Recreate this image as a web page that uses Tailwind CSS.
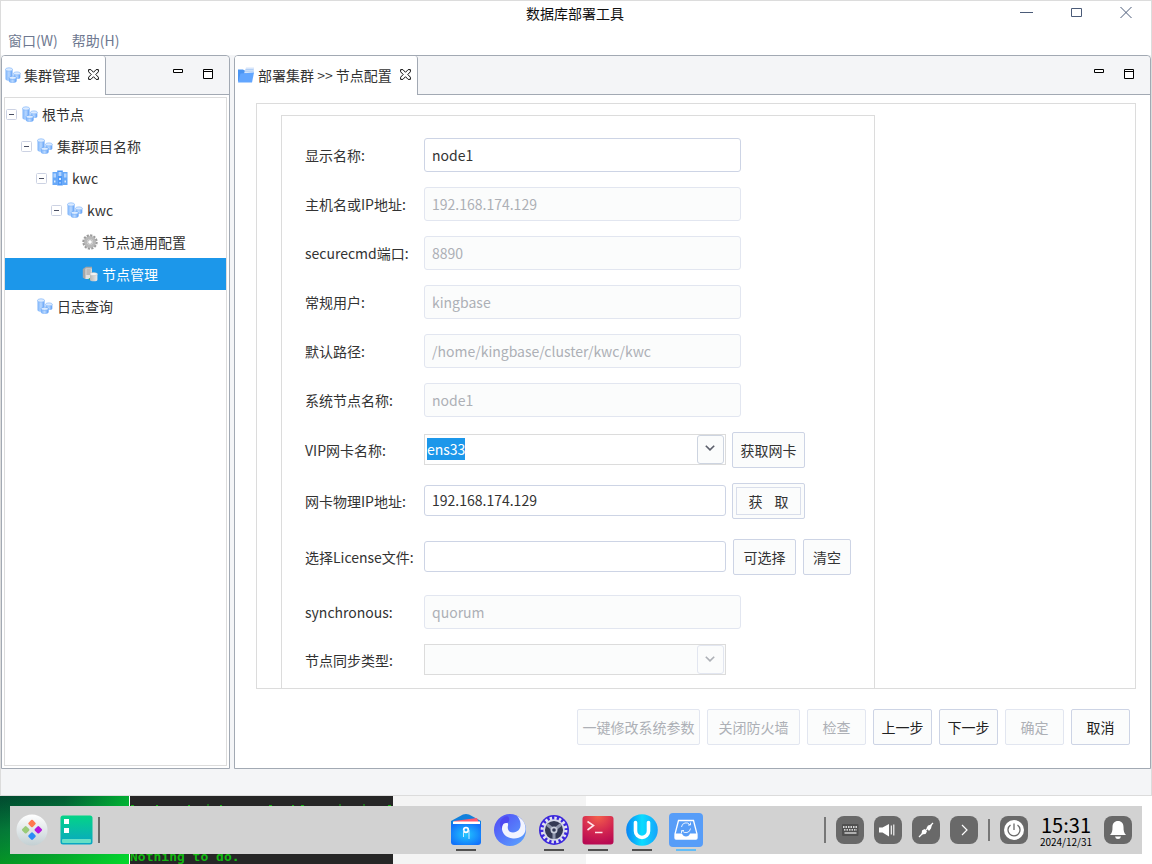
<!DOCTYPE html>
<html lang="zh-CN">
<head>
  <meta charset="UTF-8" />
  <meta name="viewport" content="width=device-width, initial-scale=1.0" />
  <title>数据库部署工具</title>
  <script src="https://cdn.jsdelivr.net/npm/@tailwindcss/browser@4"></script>
</head>
<body class="h-screen flex flex-col overflow-hidden bg-white font-['Noto_Sans_CJK_SC',sans-serif] text-sm text-[#333]">

  <!-- Icons -->
  <svg class="absolute size-0">
    <defs>
      <linearGradient id="cyl" x1="0" x2="1"><stop offset="0" stop-color="#7ab2fa" /><stop offset=".5" stop-color="#b9d8ff" /><stop offset="1" stop-color="#5c9df5" /></linearGradient>
      <linearGradient id="grey" x1="0" x2="1"><stop offset="0" stop-color="#b8b8b8" /><stop offset="1" stop-color="#e9e9e9" /></linearGradient>
    </defs>
    <symbol id="i-db" viewBox="0 0 16 16">
      <path d="M.5 2.500v9.500c0 1.200 1.500 1.800 3.500 1.800s3.500-.6 3.500-1.800V2.500z" fill="url(#cyl)" />
      <ellipse cx="4" cy="2.500" rx="3.500" ry="1.700" fill="#dcebff" stroke="#84b7fa" stroke-width=".7" />
      <path d="M8.500 6.500v4c0 1 1.400 1.600 3.300 1.600s3.500-.6 3.500-1.600v-4z" fill="url(#cyl)" />
      <ellipse cx="11.900" cy="6.400" rx="3.400" ry="1.500" fill="#dcebff" stroke="#84b7fa" stroke-width=".7" />
      <path d="M4 10.800V14c0 1 1.500 1.600 3.700 1.600s3.700-.6 3.700-1.600v-3.200z" fill="url(#cyl)" stroke="#6faaf8" stroke-width=".5" />
      <ellipse cx="7.700" cy="10.800" rx="3.700" ry="1.600" fill="#dcebff" stroke="#6faaf8" stroke-width=".7" />
    </symbol>
    <symbol id="i-rack" viewBox="0 0 16 16">
      <path d="M.5 2h4.700v13H.5zM10.800 2h4.700v13h-4.700z" fill="#67a8f8" />
      <path d="M5.200.5h5.600v15H5.200z" fill="#4f99f7" />
      <path d="M1.500 3.500h2.500v4H1.500zM12 3.500h2.500v4H12zM6.500 2h3v4h-3z" fill="#b4d5ff" />
      <path d="M2 10.500h1.500v2H2zM12.500 10.500H14v2h-1.500zM7 8h2v2H7zM7.500 12h1v1.500h-1z" fill="#dcecff" />
    </symbol>
    <symbol id="i-gear" viewBox="0 0 16 16">
      <circle cx="8" cy="8" r="6.700" fill="none" stroke="#9b9b9b" stroke-width="2" stroke-dasharray="2.200 1.300" />
      <circle cx="8" cy="8" r="4.300" fill="none" stroke="#b9b9b9" stroke-width="3" />
      <circle cx="8" cy="8" r="5.900" fill="none" stroke="#969696" stroke-width=".5" />
      <circle cx="8" cy="8" r="2.300" fill="#fff" stroke="#8f8f8f" stroke-width=".6" />
    </symbol>
    <symbol id="i-server" viewBox="0 0 16 16">
      <path d="M.8 3 4 .8h6V13H3L.8 11.500z" fill="#a6a6a6" />
      <path d="M3.500 2.500h6.300V13H3.500z" fill="#e3e3e3" />
      <path d="M4.300 4h4.500M4.300 6h4.500M4.300 8h4" stroke="#8a8a8a" stroke-width=".9" />
      <path d="M8 8v5.800c0 1 1.400 1.500 3.700 1.500s3.700-.5 3.700-1.500V8z" fill="url(#grey)" />
      <ellipse cx="11.700" cy="8" rx="3.700" ry="1.500" fill="#f5f5f5" stroke="#bbb" stroke-width=".5" />
      <path d="M6.800 12.200h1.200v1.200H6.800z" fill="#3fae49" />
    </symbol>
    <symbol id="i-folder" viewBox="0 0 16 16">
      <path d="M0 2.500h5l1.500 1H8v11H0z" fill="#4b95f3" />
      <path d="M8 .5h8v6H6z" fill="#d7e6fb" />
      <path d="M7.500 2.500h8M7 4.200h8.500" stroke="#a8c9f5" stroke-width=".8" />
      <path d="M2.500 6.500 16 5.500l-2 10H0z" fill="#62a6ff" />
    </symbol>
    <symbol id="i-close" viewBox="0 0 11 11">
      <path d="M.6.6h2.300l2.600 2.700L8.100.6h2.300v2.200L7.800 5.500l2.600 2.700v2.200H8.100L5.500 7.700l-2.600 2.700H.6V8.200l2.600-2.700L.6 2.800z" fill="#fff" stroke="#111" stroke-width="1" />
    </symbol>
    <symbol id="i-min" viewBox="0 0 10 10"><path d="M.5.500h9v3h-9z" fill="#fff" stroke="#000" /></symbol>
    <symbol id="i-max" viewBox="0 0 10 10"><path d="M.5.500h9v9h-9zM1 2.500h8" fill="#fff" stroke="#000" /></symbol>
    <symbol id="i-minus" viewBox="0 0 11 11"><rect x=".5" y=".5" width="10" height="10" rx="1" fill="#fff" stroke="#ccd2e3" /><path d="M3 5.500h5" stroke="#4a4f63" /></symbol>
    <symbol id="i-down" viewBox="0 0 10 6"><path d="m.8.700 4.200 4.200L9.200.700" fill="none" stroke="currentColor" stroke-width="1.600" /></symbol>
  </svg>

  <!-- Janela principal -->
  <div class="flex-1 min-h-0 flex flex-col border border-[#dcdcdc] bg-[#f4f5f7]">
    <header class="relative bg-white h-[54px] shrink-0">
      <h1 class="text-center leading-6 pr-[2px] text-[#111]">数据库部署工具</h1>
      <div class="absolute right-[19px] top-[5px] flex gap-[38px] text-[#4b5b78]">
        <button aria-label="最小化"><svg class="w-[13px] h-[13px]" viewBox="0 0 13 13"><path d="M0 6.500h13" stroke="currentColor" /></svg></button>
        <button aria-label="最大化"><svg class="w-[11px] h-[13px]" viewBox="0 0 11 13"><path d="M.5 2.500h10v8H.500z" fill="none" stroke="currentColor" /></svg></button>
        <button aria-label="关闭"><svg class="w-[12px] h-[13px]" viewBox="0 0 12 13"><path d="m.5 1 11 11M11.500 1l-11 11" fill="none" stroke="currentColor" /></svg></button>
      </div>
      <nav class="flex gap-[14px] px-[7px] pt-[5px] text-[#6e7890]">
        <button>窗口(W)</button>
        <button>帮助(H)</button>
      </nav>
    </header>

    <div class="flex-1 min-h-0 flex gap-1">
      <!-- Árvore -->
      <aside class="w-[229px] shrink-0 flex flex-col bg-white border border-[#a2a9b3] rounded-t-[4px]">
        <div class="flex h-[39px] shrink-0 bg-[#f4f5f7] rounded-t-[4px]">
          <div class="flex items-center pl-[3px] pr-[6px] pb-[2px] bg-white border-r border-[#a2a9b3] rounded-t-[3px]">
            <svg class="size-4 mr-[3px]"><use href="#i-db" /></svg>
            <span>集群管理</span>
            <button class="ml-2" aria-label="关闭"><svg class="size-[11px]"><use href="#i-close" /></svg></button>
          </div>
          <div class="flex-1 flex justify-end items-start gap-5 pt-[13px] pr-4 border-b border-[#a2a9b3]">
            <button aria-label="最小化"><svg class="size-[10px]"><use href="#i-min" /></svg></button>
            <button aria-label="最大化"><svg class="size-[10px]"><use href="#i-max" /></svg></button>
          </div>
        </div>
        <ul class="flex-1 m-[2px] border border-[#dcdcdc] *:flex *:items-center *:h-8">
          <li class="pl-[1px]"><svg class="size-[11px] mr-[5px]"><use href="#i-minus" /></svg><svg class="size-4 mr-1"><use href="#i-db" /></svg>根节点</li>
          <li class="pl-4"><svg class="size-[11px] mr-[5px]"><use href="#i-minus" /></svg><svg class="size-4 mr-1"><use href="#i-db" /></svg>集群项目名称</li>
          <li class="pl-[31px]"><svg class="size-[11px] mr-[5px]"><use href="#i-minus" /></svg><svg class="size-4 mr-1"><use href="#i-rack" /></svg>kwc</li>
          <li class="pl-[46px]"><svg class="size-[11px] mr-[5px]"><use href="#i-minus" /></svg><svg class="size-4 mr-1"><use href="#i-db" /></svg>kwc</li>
          <li class="pl-[77px]"><svg class="size-4 mr-1"><use href="#i-gear" /></svg>节点通用配置</li>
          <li class="pl-[77px] bg-[#1c97ea] text-white"><svg class="size-4 mr-1"><use href="#i-server" /></svg>节点管理</li>
          <li class="pl-8"><svg class="size-4 mr-1"><use href="#i-db" /></svg>日志查询</li>
        </ul>
      </aside>

      <!-- Configuração do nó -->
      <main class="flex-1 min-w-0 flex flex-col bg-white border border-[#a2a9b3] rounded-t-[4px]">
        <div class="flex h-[39px] shrink-0 bg-[#f4f5f7] rounded-t-[4px]">
          <div class="flex items-center pl-[3px] pr-[6px] pb-[2px] bg-white border-r border-[#a2a9b3] rounded-t-[3px]">
            <svg class="size-4 mr-1"><use href="#i-folder" /></svg>
            <span>部署集群 &gt;&gt; 节点配置</span>
            <button class="ml-2" aria-label="关闭"><svg class="size-[11px]"><use href="#i-close" /></svg></button>
          </div>
          <div class="flex-1 flex justify-end items-start gap-5 pt-[13px] pr-4 border-b border-[#a2a9b3]">
            <button aria-label="最小化"><svg class="size-[10px]"><use href="#i-min" /></svg></button>
            <button aria-label="最大化"><svg class="size-[10px]"><use href="#i-max" /></svg></button>
          </div>
        </div>

        <form class="flex-1 min-h-0 flex flex-col pt-2 pl-[21px] pr-[14px] pb-[23px]">
          <div class="flex-1 min-h-0 overflow-hidden border border-[#dcdcdc] pt-[11px] pl-6">
            <div class="w-[594px] h-full border border-b-0 border-[#dcdcdc] pt-[22px] pl-[23px]">
              <div class="flex flex-col gap-[15px]">
                <div class="flex items-center h-[34px]">
                  <label for="nome" class="w-[119px]">显示名称:</label>
                  <input id="nome" value="node1" class="w-[317px] h-[34px] px-[7px] border border-[#cdd4e5] rounded-[3px]">
                </div>
                <div class="flex items-center h-[34px]">
                  <label for="host" class="w-[119px]">主机名或IP地址:</label>
                  <input id="host" value="192.168.174.129" disabled class="w-[317px] h-[34px] px-[7px] border border-[#e2e6f0] rounded-[3px] bg-[#fbfcfc] text-[#adb0b6]">
                </div>
                <div class="flex items-center h-[34px]">
                  <label for="porta" class="w-[119px]">securecmd端口:</label>
                  <input id="porta" value="8890" disabled class="w-[317px] h-[34px] px-[7px] border border-[#e2e6f0] rounded-[3px] bg-[#fbfcfc] text-[#adb0b6]">
                </div>
                <div class="flex items-center h-[34px]">
                  <label for="usuario" class="w-[119px]">常规用户:</label>
                  <input id="usuario" value="kingbase" disabled class="w-[317px] h-[34px] px-[7px] border border-[#e2e6f0] rounded-[3px] bg-[#fbfcfc] text-[#adb0b6]">
                </div>
                <div class="flex items-center h-[34px]">
                  <label for="caminho" class="w-[119px]">默认路径:</label>
                  <input id="caminho" value="/home/kingbase/cluster/kwc/kwc" disabled class="w-[317px] h-[34px] px-[7px] border border-[#e2e6f0] rounded-[3px] bg-[#fbfcfc] text-[#adb0b6]">
                </div>
                <div class="flex items-center h-[34px]">
                  <label for="sistema" class="w-[119px]">系统节点名称:</label>
                  <input id="sistema" value="node1" disabled class="w-[317px] h-[34px] px-[7px] border border-[#e2e6f0] rounded-[3px] bg-[#fbfcfc] text-[#adb0b6]">
                </div>
                <div class="flex items-center h-9">
                  <label for="vip" class="w-[119px]">VIP网卡名称:</label>
                  <div class="flex items-center w-[302px] h-[31px] mb-[2px] pl-[2px] pr-[1px] border border-[#dcdcdc]">
                    <select id="vip" class="appearance-none field-sizing-content h-[22px] leading-[22px] bg-[#1c97ea] text-white"><option>ens33</option></select>
                    <span class="ml-auto flex items-center justify-center w-[27px] h-[29px] pr-[2px] pb-[2px] border border-[#cdd4e0] rounded-[3px] bg-[#fbfcfc] text-[#5c5f6b]"><svg class="w-[10px] h-[6px]"><use href="#i-down" /></svg></span>
                  </div>
                  <button type="button" class="ml-[6px] w-[73px] h-9 border border-[#cdd4e5] rounded-[2px] bg-[#fbfcfc]">获取网卡</button>
                </div>
                <div class="flex items-center h-9">
                  <label for="ip" class="w-[119px]">网卡物理IP地址:</label>
                  <input id="ip" value="192.168.174.129" class="w-[302px] h-[31px] mb-[2px] px-[7px] border border-[#cdd4e5] rounded-[3px]">
                  <button type="button" class="ml-[6px] w-[73px] h-9 p-[3px] border border-[#cdd4e5] rounded-[2px] bg-[#fbfcfc]"><span class="flex items-center justify-center gap-3 h-full border border-[#d9deeb]"><span>获</span><span>取</span></span></button>
                </div>
              </div>
              <div class="flex items-center h-9 mt-5">
                <label for="licenca" class="w-[119px] whitespace-nowrap">选择License文件:</label>
                <input id="licenca" class="w-[302px] h-[31px] mb-[2px] px-[7px] border border-[#cdd4e5] rounded-[3px]">
                <button type="button" class="ml-[7px] w-[63px] h-9 border border-[#cdd4e5] rounded-[2px] bg-[#fbfcfc]">可选择</button>
                <button type="button" class="ml-[7px] w-[48px] h-9 border border-[#cdd4e5] rounded-[2px] bg-[#fbfcfc]">清空</button>
              </div>
              <div class="flex items-center h-[34px] mt-5">
                <label for="sync" class="w-[119px]">synchronous:</label>
                <input id="sync" value="quorum" disabled class="w-[317px] h-[34px] px-[7px] border border-[#e2e6f0] rounded-[3px] bg-[#fbfcfc] text-[#adb0b6]">
              </div>
              <div class="flex items-center h-[31px] mt-[15px]">
                <label for="tipo" class="w-[119px]">节点同步类型:</label>
                <div class="flex items-center w-[302px] h-[31px] pr-[1px] border border-[#dcdcdc] bg-[#fbfcfc]">
                  <select id="tipo" disabled class="appearance-none flex-1 h-full"></select>
                  <span class="flex items-center justify-center w-[27px] h-[29px] pr-[2px] pb-[2px] border border-[#e2e6f0] rounded-[3px] text-[#adb0b6]"><svg class="w-[10px] h-[6px]"><use href="#i-down" /></svg></span>
                </div>
              </div>
            </div>
          </div>

          <div class="flex justify-end gap-[7px] mt-5 pr-[6px] *:h-9 *:border *:rounded-[2px] *:bg-[#fbfcfc] *:border-[#cdd4e5] *:disabled:border-[#e2e6f0] *:disabled:text-[#adb0b6]">
            <button type="button" disabled class="w-[123px]">一键修改系统参数</button>
            <button type="button" disabled class="w-[93px]">关闭防火墙</button>
            <button type="button" disabled class="w-[59px]">检查</button>
            <button type="button" class="w-[59px] text-[#222]">上一步</button>
            <button type="button" class="w-[59px] text-[#222]">下一步</button>
            <button type="button" disabled class="w-[59px]">确定</button>
            <button type="button" class="w-[59px] text-[#222]">取消</button>
          </div>
        </form>
      </main>
    </div>
    <footer class="h-[26px] shrink-0"></footer>
  </div>

  <!-- Área de trabalho -->
  <div class="relative h-[68px] shrink-0 flex">
    <div class="w-[129px] bg-linear-to-b from-[#02492f] via-[#058a3a] to-[#08b51c]">
      <div class="h-full bg-linear-to-r from-[#004a30]/30 via-[#00a040]/20 to-[#00f034]/60"></div>
    </div>
    <div class="relative w-[263px] ml-[1px] overflow-hidden bg-[#262626]">
      <svg class="absolute left-0 top-0 w-[264px] h-[10px]" viewBox="0 0 264 10"><path d="M1 9.500h3M26 9.500h2M58 9.500h2M77 9h2M90 9.500h2M139 9.500h3M162 9.500h2M171 9.500h3M209 9h2M233 9h2M258 9.500h3" stroke="#12b812" stroke-width="1" /></svg>
      <p class="absolute left-0 bottom-0 leading-[14px] text-[13px] font-bold font-['DejaVu_Sans_Mono',monospace] text-[#12b812]">Nothing to do.</p>
    </div>
    <div class="w-[193px] bg-[#f4f4f4]"></div>

    <!-- Barra de tarefas -->
    <div class="absolute inset-x-[10px] top-[10px] h-12 flex items-center bg-[#d2d2d2]">
      <button class="ml-[6px]" aria-label="启动器">
        <svg class="size-8" viewBox="0 0 32 32">
          <defs><linearGradient id="lg1" x2="0" y2="1"><stop stop-color="#fff" /><stop offset="1" stop-color="#c3d0d3" /></linearGradient></defs>
          <circle cx="16" cy="16" r="15.500" fill="url(#lg1)" />
          <rect x="-3" y="-3" width="6" height="6" rx="1.200" transform="translate(16 9.500) rotate(45)" fill="#ff7950" />
          <rect x="-3" y="-3" width="6" height="6" rx="1.200" transform="translate(9.700 15.800) rotate(45)" fill="#9acb78" />
          <rect x="-3" y="-3" width="6" height="6" rx="1.200" transform="translate(22.300 15.800) rotate(45)" fill="#b616dc" />
          <rect x="-3" y="-3" width="6" height="6" rx="1.200" transform="translate(16 22.100) rotate(45)" fill="#2b8cf5" />
        </svg>
      </button>
      <button class="ml-3" aria-label="多任务视图">
        <svg class="w-[33px] h-[30px]" viewBox="0 0 33 30">
          <defs><linearGradient id="lg2" x2="0" y2="1"><stop stop-color="#04d486" /><stop offset="1" stop-color="#0aa6c4" /></linearGradient></defs>
          <rect x=".5" y=".5" width="32" height="29" rx="2.500" fill="url(#lg2)" />
          <path d="M4 4h5v5H4zM4 13h5v5H4z" fill="#fff" />
          <rect x="2" y="24" width="29" height="4" rx="1" fill="#66e0c6" />
        </svg>
      </button>
      <div class="ml-[5px] w-[2px] h-[26px] bg-[#6b6b6b]"></div>

      <div class="absolute left-[439px] top-[7px] flex gap-[10px]">
        <button class="flex flex-col items-center w-[34px]" aria-label="文件管理器">
          <svg class="size-[34px]" viewBox="0 0 34 34">
            <defs><radialGradient id="lg3" cx=".5" cy=".5" r=".6"><stop stop-color="#22c6ff" /><stop offset="1" stop-color="#1272fa" /></radialGradient></defs>
            <path d="M2 8 14 1.500q3-1 6 0L32 8v6H2z" fill="#1180dc" />
            <path d="m5 8 23-3 2 5H5z" fill="#ff5a6e" /><path d="M4 8.500h27v4H4z" fill="#fff" />
            <path d="M2 11h30v18q0 3-3 3H5q-3 0-3-3z" fill="url(#lg3)" />
            <circle cx="17" cy="17" r="2.300" fill="none" stroke="#fff" stroke-width="1.700" /><path d="M14.500 17v7M20 17v9" stroke="#cdeaff" stroke-width="1" />
          </svg>
          <span class="w-5 h-[2px] mt-[2px] bg-[#505050]"></span>
        </button>
        <button class="flex flex-col items-center w-[34px]" aria-label="浏览器">
          <svg class="size-[34px]" viewBox="0 0 34 34">
            <defs><linearGradient id="lg4" y2="1"><stop stop-color="#5148f5" /><stop offset="1" stop-color="#5aa8ff" /></linearGradient></defs>
            <circle cx="17" cy="17" r="16" fill="url(#lg4)" />
            <path d="M24 3c6 3 9 8 8.500 14C32 22 27 26 20 25.500 13 25 8 20 9 13c.3-2 1.500-4 3.500-4 2 0 3 1.500 2.500 3.500-1 4 1 7 5 7 5 0 8-4 7.500-9C27.200 7.500 26 5 24 3z" fill="#f2f4ff" />
            <path d="M8 7c3-4 7-5 8-2 1 3-1 5-3 5-3 0-4 3-4 6-2-2-3-6-1-9z" fill="#4d48f0" />
          </svg>
        </button>
        <button class="flex flex-col items-center w-[34px]" aria-label="控制中心">
          <svg class="size-[34px]" viewBox="0 0 34 34">
            <circle cx="17" cy="17" r="15" fill="#3c28dc" />
            <circle cx="17" cy="17" r="11.800" fill="none" stroke="#e3e3f0" stroke-width="3.200" stroke-dasharray="2.400 2.230" />
            <circle cx="17" cy="17" r="9.900" fill="#343a54" stroke="#d5d8e8" stroke-width="1.700" />
            <path d="M17 17 10 11.500M17 17l7-5.500M17 17v9" stroke="#8f96ac" stroke-width="3" /><circle cx="17" cy="17" r="3.500" fill="#c8cddb" /><circle cx="17" cy="17" r="1.800" fill="#333a55" />
          </svg>
          <span class="w-5 h-[2px] mt-[2px] bg-[#505050]"></span>
        </button>
        <button class="flex flex-col items-center w-[34px]" aria-label="终端">
          <svg class="size-[34px]" viewBox="0 0 34 34">
            <defs><radialGradient id="lg5" cx=".5" cy="0" r="1"><stop stop-color="#f4614b" /><stop offset=".6" stop-color="#d12350" /><stop offset="1" stop-color="#b80a52" /></radialGradient></defs>
            <rect x="1.500" y="3" width="31" height="28.500" rx="3" fill="url(#lg5)" />
            <path d="m6.500 8.500 6 4-6 4.500M14 19.500h7.500" fill="none" stroke="#ffe3e8" stroke-width="1.600" />
          </svg>
          <span class="w-5 h-[2px] mt-[2px] bg-[#505050]"></span>
        </button>
        <button class="flex flex-col items-center w-[34px]" aria-label="助手">
          <svg class="size-[34px]" viewBox="0 0 34 34">
            <defs><linearGradient id="lg6" x2="1"><stop stop-color="#0a84f4" /><stop offset=".5" stop-color="#0bdcff" /><stop offset="1" stop-color="#15a3fb" /></linearGradient></defs>
            <circle cx="17" cy="17" r="15.800" fill="url(#lg6)" />
            <path d="M10.500 9.500V18a6.500 6.500 0 0 0 13 0V9.500" fill="none" stroke="#fff" stroke-width="3.600" stroke-linecap="round" />
          </svg>
          <span class="w-5 h-[2px] mt-[2px] bg-[#505050]"></span>
        </button>
        <button class="flex flex-col items-center w-[34px]" aria-label="部署工具">
          <svg class="size-[34px]" viewBox="0 0 34 34">
            <rect width="34" height="34" rx="4" fill="#579df8" />
            <path d="M9.500 7.500h15L28 21v4q0 1-1 1H7q-1 0-1-1v-4z" fill="none" stroke="#fff" stroke-width="1.300" />
            <path d="M6 20.500h7q1 3 4 3t4-3h7V25q0 1-1 1H7q-1 0-1-1z" fill="#fff" />
            <path d="M12.500 14a4.600 4.600 0 0 1 8.500-2M21.500 15.500a4.600 4.600 0 0 1-8.500 2M21.500 9.500V12H19M12.500 20v-2.500H15" fill="none" stroke="#e6f1ff" stroke-width="1" />
          </svg>
          <span class="w-5 h-[2px] mt-[2px] bg-[#62bdf7]"></span>
        </button>
      </div>

      <div class="ml-auto flex items-center pr-[10px]">
        <div class="w-[2px] h-[26px] mr-[10px] bg-[#777]"></div>
        <div class="flex gap-[10px]">
          <button class="size-7 rounded-lg bg-[#696969]" aria-label="键盘"><svg viewBox="0 0 28 28"><rect x="6" y="8" width="16.500" height="12" rx="1" fill="#505050" /><path d="M7 11h14.500M8 13.800h13" stroke="#fff" stroke-width="1.300" stroke-dasharray="1.500 1" /><path d="M8.500 17h12" stroke="#fff" stroke-width="1.100" /></svg></button>
          <button class="size-7 rounded-lg bg-[#696969]" aria-label="音量"><svg viewBox="0 0 28 28"><path d="M5 11.500h3.500L15 8v12.500l-6.500-4H5z" fill="#fff" /><path d="M17.300 9.500v9M19.800 8.500v11" stroke="#fff" stroke-width="1.100" /></svg></button>
          <button class="size-7 rounded-lg bg-[#696969]" aria-label="网络"><svg viewBox="0 0 28 28"><path d="m7 21 14-14" stroke="#fff" stroke-width="1.300" /><path d="m9.500 18.500.5-4 2.500-1.500 2.500 2.500-1.500 2.500zM14.500 12l1.500-2.500 4-1-1 4-2 2.500z" fill="#fff" /></svg></button>
          <button class="size-7 rounded-lg bg-[#696969]" aria-label="展开"><svg viewBox="0 0 28 28"><path d="m12 9 5 5-5 5" fill="none" stroke="#fff" stroke-width="1.200" /></svg></button>
        </div>
        <div class="w-[2px] h-[22px] mx-[10px] bg-[#777]"></div>
        <button class="size-7 rounded-lg bg-[#696969]" aria-label="关机"><svg viewBox="0 0 28 28"><circle cx="14" cy="14" r="10" fill="#fff" /><path d="M10.500 9a6 6 0 1 0 7 0M14 7.500V14" fill="none" stroke="#696969" stroke-width="1.300" /></svg></button>
        <div class="w-[76px] text-center text-black">
          <p class="text-xl leading-6">15:31</p>
          <p class="text-[10px] leading-[10px]">2024/12/31</p>
        </div>
        <button class="size-7 rounded-lg bg-[#696969]" aria-label="通知"><svg viewBox="0 0 28 28"><path d="M14 5c-3.500 0-5.500 2.500-5.500 6 0 4-.5 6-2.500 8h16c-2-2-2.500-4-2.500-8 0-3.500-2-6-5.500-6zM11 20.500h6q-.5 2.500-3 2.500t-3-2.500z" fill="#fff" /></svg></button>
      </div>
    </div>
  </div>
</body>
</html>
